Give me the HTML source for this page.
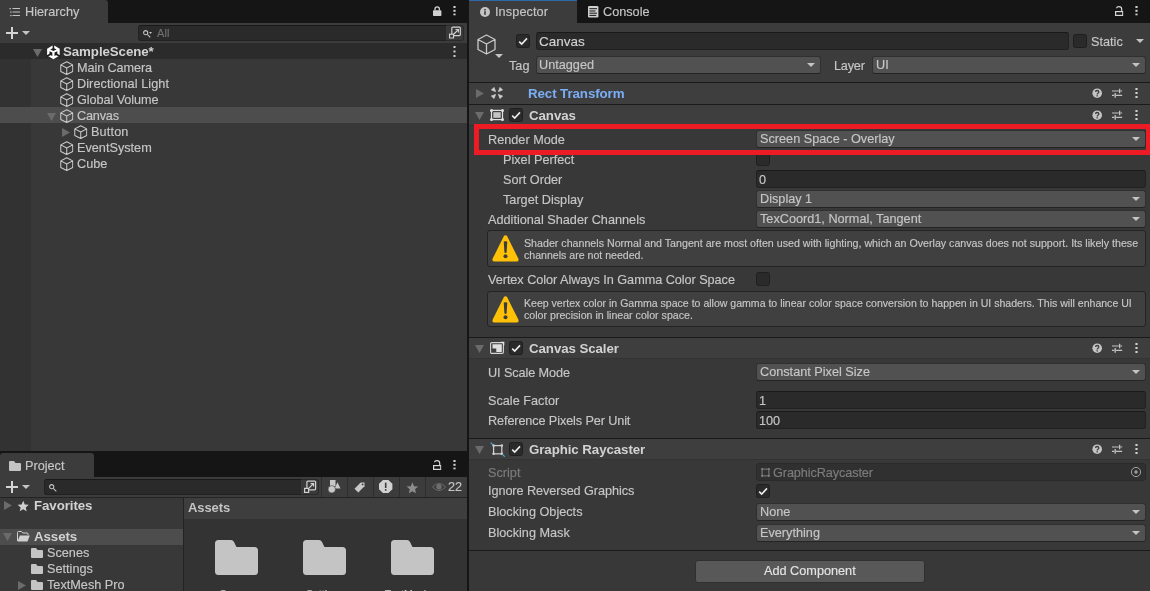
<!DOCTYPE html>
<html>
<head>
<meta charset="utf-8">
<title>Unity Inspector</title>
<style>
*{box-sizing:border-box;margin:0;padding:0}
html,body{width:1150px;height:591px;overflow:hidden;background:#151515}
body{font-family:"Liberation Sans",sans-serif;font-size:12.7px;color:#c6c6c6;position:relative}
.a{position:absolute}
.t{position:absolute;white-space:nowrap;line-height:16px;height:16px;will-change:transform;-webkit-text-stroke:0.15px}
.b{font-weight:bold;font-size:13.3px;color:#d2d2d2;-webkit-text-stroke:0;letter-spacing:-0.08px;margin-left:-0.5px}
svg{position:absolute;overflow:visible}
.srch{background:#2a2a2a;border:1px solid #212121;border-top-color:#191919;border-radius:3px}
.hdr{position:absolute;left:469px;width:681px;background:#3e3e3e;border-top:1px solid #1a1a1a}
.fld{position:absolute;background:#2a2a2a;border:1px solid #212121;border-top-color:#191919;border-radius:3px}
.dd{position:absolute;background:#515151;border:1px solid #303030;border-bottom-color:#242424;border-radius:3px}
.cb{position:absolute;width:14px;height:14px;background:#2a2a2a;border:1px solid #1f1f1f;border-radius:2.5px}
</style>
</head>
<body>
<svg width="0" height="0" style="position:absolute"><defs>
<symbol id="cube" viewBox="0 0 14 15"><path d="M7 .8 13.200 4 13.200 10.800 7 14 .8 10.800 .8 4Z M.8 4 7 7.200 13.200 4 M7 7.200V14" fill="none" stroke="#cdcdcd" stroke-width="1.050" stroke-linejoin="round"/></symbol>
<symbol id="kebab" viewBox="0 0 3 11"><rect x=".5" y="0" width="2" height="2" fill="#d0d0d0"/><rect x=".5" y="4.500" width="2" height="2" fill="#d0d0d0"/><rect x=".5" y="9" width="2" height="2" fill="#d0d0d0"/></symbol>
<symbol id="kebabT" viewBox="0 0 3 9.600"><rect x=".4" y="0" width="2.200" height="2" fill="#d0d0d0"/><rect x=".4" y="3.800" width="2.200" height="2" fill="#d0d0d0"/><rect x=".4" y="7.600" width="2.200" height="2" fill="#d0d0d0"/></symbol>
<symbol id="kebabH" viewBox="0 0 3 10"><rect x=".4" y="0" width="2.200" height="2" fill="#d0d0d0"/><rect x=".4" y="4" width="2.200" height="2" fill="#d0d0d0"/><rect x=".4" y="8" width="2.200" height="2" fill="#d0d0d0"/></symbol>
<symbol id="tdown" viewBox="0 0 9 8"><path d="M0 0H9L4.500 8Z" fill="#6b6b6b"/></symbol>
<symbol id="tright" viewBox="0 0 8 9"><path d="M0 0V9L8 4.500Z" fill="#6b6b6b"/></symbol>
<symbol id="ddarr" viewBox="0 0 8 4"><path d="M0 0H8L4 4Z" fill="#c4c4c4"/></symbol>
<symbol id="plus" viewBox="0 0 12 12"><path d="M5 0H7V5H12V7H7V12H5V7H0V5H5Z" fill="#d4d4d4"/></symbol>
<symbol id="pick" viewBox="0 0 13 13"><rect x="2.900" y="1.100" width="8.700" height="8.700" rx="1" fill="none" stroke="#d0d0d0" stroke-width="1.200"/><path d="M5 8.200 9.300 3.900M6.600 3.600H9.600V6.600" fill="none" stroke="#d0d0d0" stroke-width="1.200"/><rect x=".6" y="8.400" width="4" height="4" fill="#333" stroke="#d0d0d0" stroke-width="1.200"/></symbol>
<symbol id="mag" viewBox="0 0 8 8"><circle cx="2.700" cy="2.700" r="2.100" fill="none" stroke="#c4c4c4" stroke-width="1.050"/><path d="M4.300 4.300 7.300 7.300" stroke="#c4c4c4" stroke-width="1.100"/></symbol>
<symbol id="folder" viewBox="0 0 12 10"><path d="M0 1Q0 0 1 0H5L6.500 2H11Q12 2 12 3V9Q12 10 11 10H1Q0 10 0 9Z" fill="#c4c4c4"/></symbol>
<symbol id="check" viewBox="0 0 14 14"><path d="M3.200 7.600 5.700 10.100 11 4.400" fill="none" stroke="#ededed" stroke-width="1.600"/></symbol>
<symbol id="help" viewBox="0 0 12 12"><circle cx="6" cy="6" r="5.500" fill="#c4c4c4"/><path d="M4.100 4.700Q4.100 2.900 6 2.900Q7.900 2.900 7.900 4.500Q7.900 5.500 6.900 6Q6 6.500 6 7.400" fill="none" stroke="#3e3e3e" stroke-width="1.500"/><rect x="5.200" y="8.300" width="1.600" height="1.500" fill="#3e3e3e"/></symbol>
<symbol id="preset" viewBox="0 0 12 12"><path d="M0 3.500H12M0 8.500H12" stroke="#c4c4c4" stroke-width="1.300"/><path d="M7.800 3.500H9.800M2.700 8.500H4.700" stroke="#3e3e3e" stroke-width="1.500"/><path d="M8.800 .8V6.200M3.700 5.800V11.200" stroke="#c4c4c4" stroke-width="1.500"/></symbol>
<symbol id="warn" viewBox="0 0 27 27"><path d="M13.500 .3Q14.600 .3 15.300 1.500L26.300 23.600Q27.300 26.600 24.600 26.600H2.400Q-.3 26.600 .7 23.600L11.700 1.500Q12.400 .3 13.500 .3Z" fill="#ffc107"/><path d="M11.700 6.600Q13.500 5.800 15.300 6.600L14.600 17.600Q13.500 18.200 12.400 17.600Z" fill="#3c3c3c"/><circle cx="13.500" cy="21.200" r="2" fill="#3c3c3c"/></symbol>
<symbol id="unlock" viewBox="0 0 8.400 10"><path d="M1.500 2.300Q1.700 .6 4 .6Q6.700 .6 6.700 3V5.600" fill="none" stroke="#d8d8d8" stroke-width="1.200"/><rect x=".6" y="5.600" width="7.200" height="3.800" fill="none" stroke="#d8d8d8" stroke-width="1.200"/></symbol>
<symbol id="ray" viewBox="0 0 14 14"><rect x="2.700" y="2.700" width="8.600" height="8.600" fill="none" stroke="currentColor" stroke-width="1.300"/><circle cx="2.700" cy="2.700" r="1.300" fill="currentColor"/><circle cx="11.300" cy="2.700" r="1.300" fill="currentColor"/><circle cx="2.700" cy="11.300" r="1.300" fill="currentColor"/><circle cx="11.300" cy="11.300" r="1.300" fill="currentColor"/></symbol>
</defs></svg>
<div class="a" style="left:0px;top:0px;width:467px;height:451px;background:#383838;"></div>
<div class="a" style="left:0px;top:43px;width:31px;height:408px;background:#323232;"></div>
<div class="a" style="left:0px;top:0px;width:467px;height:23px;background:#151515;"></div>
<div class="a" style="left:0px;top:0px;width:108px;height:23px;background:#3c3c3c;border-top-right-radius:3px"></div>
<div class="a" style="left:0px;top:23px;width:467px;height:20px;background:#3c3c3c;"></div>
<div class="a" style="left:0px;top:43px;width:467px;height:16px;background:#2b2b2b;"></div>
<div class="a" style="left:0px;top:107px;width:467px;height:16px;background:#4d4d4d;"></div>
<svg class="a" style="left:9px;top:7px" width="11" height="10" viewBox="0 0 11 10"><path d="M3.500 1.500H11M3.500 5H11M3.500 8.500H11" stroke="#c4c4c4" stroke-width="1.200"/><rect x="0.500" y="1" width="1.300" height="1.300" fill="#c4c4c4"/><rect x="1.200" y="4.400" width="1.300" height="1.300" fill="#c4c4c4"/><rect x="1.200" y="7.900" width="1.300" height="1.300" fill="#c4c4c4"/></svg>
<div class="t" style="left:25px;top:4px;">Hierarchy</div>
<svg class="a" style="left:433px;top:6px" width="8.400" height="10" viewBox="0 0 8.400 10"><path d="M2 4.500V3Q2 .8 4.200 .8Q6.400 .8 6.400 3V4.500" fill="none" stroke="#d0d0d0" stroke-width="1.300"/><rect x="0" y="4.300" width="8.400" height="5.700" rx=".8" fill="#d0d0d0"/></svg>
<svg class="a" style="left:452.5px;top:6.2px;" width="3" height="9.6"><use href="#kebabT"/></svg>
<svg class="a" style="left:6px;top:27px;" width="12" height="12"><use href="#plus"/></svg>
<svg class="a" style="left:22px;top:31px;" width="8" height="4"><use href="#ddarr"/></svg>
<div class="a srch" style="left:138px;top:25px;width:308px;height:16px;border-radius:3px 0 0 3px;border-right:none"></div>
<div class="a" style="left:446px;top:25px;width:18px;height:16px;background:#3a3a3a;border:1px solid #2a2a2a;border-left:none;border-radius:0 3px 3px 0"></div>
<svg class="a" style="left:142.7px;top:29.8px;" width="8" height="8"><use href="#mag"/></svg>
<svg class="a" style="left:149.300px;top:32px" width="3" height="2" viewBox="0 0 3 2"><path d="M0 0H3L1.500 2Z" fill="#c4c4c4"/></svg>
<div class="t" style="left:157px;top:25px;color:#6f6f6f;font-size:11px;letter-spacing:0.1px">All</div>
<svg class="a" style="left:448.9px;top:26px;" width="12.7" height="12.7"><use href="#pick"/></svg>
<svg class="a" style="left:33px;top:49px;" width="9" height="8"><use href="#tdown"/></svg>
<svg class="a" style="left:46.500px;top:44.500px" width="13" height="14.400" viewBox="0 0 13 14.400"><path d="M6.400 .1 12.700 3.700V10.600L6.400 14.300 .1 10.600V3.700Z" fill="#fff"/><path d="M5.600 0H7.200V3.300L9.500 4.400 6.400 5.900 3.300 4.400 5.600 3.300ZM2.500 6.200 5.300 7.600V10.900L2.500 9.500ZM10.300 6.200 7.500 7.600V10.900L10.300 9.500Z" fill="#1c1c1c"/><path d="M-.3 11.300 4 8.900M13.100 11.300 8.800 8.900" stroke="#1c1c1c" stroke-width="1.700"/></svg>
<div class="t b" style="left:63.5px;top:44px;">SampleScene*</div>
<svg class="a" style="left:453px;top:46px;" width="3" height="11"><use href="#kebab"/></svg>
<svg class="a" style="left:60px;top:60.5px;" width="13.5" height="14.5"><use href="#cube"/></svg>
<div class="t" style="left:77px;top:60px;letter-spacing:-0.1px">Main Camera</div>
<svg class="a" style="left:60px;top:76.5px;" width="13.5" height="14.5"><use href="#cube"/></svg>
<div class="t" style="left:77px;top:76px;letter-spacing:0.06px">Directional Light</div>
<svg class="a" style="left:60px;top:92.5px;" width="13.5" height="14.5"><use href="#cube"/></svg>
<div class="t" style="left:77px;top:92px;letter-spacing:-0.08px">Global Volume</div>
<svg class="a" style="left:60px;top:108.5px;" width="13.5" height="14.5"><use href="#cube"/></svg>
<div class="t" style="left:77px;top:108px;letter-spacing:-0.2px">Canvas</div>
<svg class="a" style="left:74px;top:124.5px;" width="13.5" height="14.5"><use href="#cube"/></svg>
<div class="t" style="left:91px;top:124px;letter-spacing:0.15px">Button</div>
<svg class="a" style="left:60px;top:140.5px;" width="13.5" height="14.5"><use href="#cube"/></svg>
<div class="t" style="left:77px;top:140px;letter-spacing:0px">EventSystem</div>
<svg class="a" style="left:60px;top:156.5px;" width="13.5" height="14.5"><use href="#cube"/></svg>
<div class="t" style="left:77px;top:156px;letter-spacing:0px">Cube</div>
<svg class="a" style="left:47px;top:112.5px;" width="9" height="8"><use href="#tdown"/></svg>
<svg class="a" style="left:62px;top:127.5px;" width="8" height="9"><use href="#tright"/></svg>
<div class="a" style="left:0px;top:451px;width:467px;height:140px;background:#383838;"></div>
<div class="a" style="left:0px;top:451px;width:467px;height:26px;background:#151515;"></div>
<div class="a" style="left:0px;top:453px;width:94px;height:24px;background:#3c3c3c;border-top-left-radius:3px;border-top-right-radius:3px"></div>
<div class="a" style="left:0px;top:477px;width:467px;height:20px;background:#3c3c3c;"></div>
<svg class="a" style="left:9px;top:461px;" width="12" height="10"><use href="#folder"/></svg>
<div class="t" style="left:25px;top:458px;">Project</div>
<svg class="a" style="left:433px;top:460px;" width="8.4" height="10"><use href="#unlock"/></svg>
<svg class="a" style="left:452.5px;top:460.2px;" width="3" height="9.6"><use href="#kebabT"/></svg>
<svg class="a" style="left:6px;top:481px;" width="12" height="12"><use href="#plus"/></svg>
<svg class="a" style="left:22px;top:485px;" width="8" height="4"><use href="#ddarr"/></svg>
<div class="a srch" style="left:44px;top:479px;width:257px;height:16px;border-radius:3px 0 0 3px;border-right:none"></div>
<div class="a" style="left:301px;top:479px;width:18px;height:16px;background:#3a3a3a;border:1px solid #2a2a2a;border-left:none;border-radius:0 3px 3px 0"></div>
<svg class="a" style="left:49px;top:484px;" width="8" height="8"><use href="#mag"/></svg>
<svg class="a" style="left:303.7px;top:480.3px;" width="13" height="13"><use href="#pick"/></svg>
<div class="a" style="left:321px;top:477px;width:1px;height:20px;background:#2e2e2e;"></div>
<div class="a" style="left:347px;top:477px;width:1px;height:20px;background:#2e2e2e;"></div>
<div class="a" style="left:373px;top:477px;width:1px;height:20px;background:#2e2e2e;"></div>
<div class="a" style="left:399px;top:477px;width:1px;height:20px;background:#2e2e2e;"></div>
<div class="a" style="left:425px;top:477px;width:1px;height:20px;background:#2e2e2e;"></div>
<svg class="a" style="left:327.500px;top:480px" width="12.500" height="13" viewBox="0 0 12.500 13"><rect x="2" y="0" width="5.500" height="6" fill="#c8c8c8"/><path d="M9.500 2.200 12.500 8.500H6.500Z" fill="#c8c8c8"/><circle cx="3.800" cy="9.300" r="3.700" fill="#c8c8c8" stroke="#3c3c3c" stroke-width=".6"/></svg>
<svg class="a" style="left:354px;top:481.500px" width="11" height="11" viewBox="0 0 11 11"><path d="M10.500 .5 10.500 4.300 4.300 10.500 .5 6.700 6.700 .5Z" fill="#c8c8c8"/><circle cx="8.600" cy="2.400" r=".9" fill="#3c3c3c"/></svg>
<svg class="a" style="left:378.800px;top:480px" width="13.400" height="13" viewBox="0 0 13.400 13"><path d="M4 0H9.400L13.400 3.800V9.200L9.400 13H4L0 9.200V3.800Z" fill="#d2d2d2"/><rect x="5.900" y="2.600" width="1.600" height="5.400" fill="#3c3c3c"/><rect x="5.900" y="9.100" width="1.600" height="1.600" fill="#3c3c3c"/></svg>
<svg class="a" style="left:406px;top:481.500px" width="12.800" height="12" viewBox="0 0 24 22.500"><path d="M12 .5 15.100 7.800 22.800 8.500 17 13.600 18.700 21.200 12 17.200 5.300 21.200 7 13.600 1.200 8.500 8.900 7.800Z" fill="#8c8c8c"/></svg>
<svg class="a" style="left:432px;top:483px" width="14" height="8" viewBox="0 0 14 8"><path d="M.4 4Q3.500 .5 7 .5Q10.500 .5 13.600 4Q10.500 7.500 7 7.500Q3.500 7.500 .4 4Z" fill="none" stroke="#6e6e6e" stroke-width=".9"/><circle cx="7" cy="3.700" r="2.700" fill="#6e6e6e"/></svg>
<div class="a" style="left:0px;top:497px;width:467px;height:1px;background:#232323;"></div>
<div class="a" style="left:0px;top:529px;width:183px;height:16px;background:#4d4d4d;"></div>
<div class="a" style="left:183px;top:498px;width:1px;height:93px;background:#232323;"></div>
<div class="a" style="left:184px;top:498px;width:283px;height:21px;background:#3e3e3e;"></div>
<div class="a" style="left:184px;top:519px;width:283px;height:72px;background:#333;"></div>
<svg class="a" style="left:4px;top:501px;" width="8" height="9"><use href="#tright"/></svg>
<svg class="a" style="left:16.800px;top:500px" width="12.400" height="12.400" viewBox="0 0 24 24"><path d="M12 1.500 15.100 8.600 22.800 9.300 17 14.400 18.700 22 12 18 5.300 22 7 14.400 1.200 9.300 8.900 8.600Z" fill="#d0d0d0"/></svg>
<div class="t b" style="left:34px;top:498px;">Favorites</div>
<svg class="a" style="left:3px;top:533px;" width="9" height="8"><use href="#tdown"/></svg>
<svg class="a" style="left:17px;top:531px" width="13" height="11" viewBox="0 0 13 11"><path d="M.5 10V1.500Q.5.5 1.500.5H4.500L5.800 2H10Q11 2 11 3V4" fill="none" stroke="#d0d0d0"/><path d="M.5 10.500 2.800 4.500H12.800L10.500 10.500Z" fill="#d0d0d0"/></svg>
<div class="t b" style="left:34px;top:529px;">Assets</div>
<svg class="a" style="left:31px;top:548px;" width="12" height="10"><use href="#folder"/></svg>
<div class="t" style="left:47px;top:545px;">Scenes</div>
<svg class="a" style="left:31px;top:564px;" width="12" height="10"><use href="#folder"/></svg>
<div class="t" style="left:47px;top:561px;">Settings</div>
<svg class="a" style="left:31px;top:580px;" width="12" height="10"><use href="#folder"/></svg>
<div class="t" style="left:47px;top:577px;">TextMesh Pro</div>
<svg class="a" style="left:18px;top:580.5px;" width="8" height="9"><use href="#tright"/></svg>
<div class="t b" style="left:188px;top:500px;color:#c4c4c4;font-size:13px">Assets</div>
<svg class="a" style="left:215px;top:540.300px" width="43" height="35" viewBox="0 0 43 35"><path d="M0 3.500Q0 0 3.500 0H16Q18 0 19 2L21.500 7H39.500Q43 7 43 10.500V31.500Q43 35 39.500 35H3.500Q0 35 0 31.500Z" fill="#c4c4c4"/></svg>
<svg class="a" style="left:303px;top:540.300px" width="43" height="35" viewBox="0 0 43 35"><path d="M0 3.500Q0 0 3.500 0H16Q18 0 19 2L21.500 7H39.500Q43 7 43 10.500V31.500Q43 35 39.500 35H3.500Q0 35 0 31.500Z" fill="#c4c4c4"/></svg>
<svg class="a" style="left:391px;top:540.300px" width="43" height="35" viewBox="0 0 43 35"><path d="M0 3.500Q0 0 3.500 0H16Q18 0 19 2L21.500 7H39.500Q43 7 43 10.500V31.500Q43 35 39.500 35H3.500Q0 35 0 31.500Z" fill="#c4c4c4"/></svg>
<div class="t" style="left:196.5px;top:587.500px;width:80px;text-align:center;font-size:10.500px;line-height:12px;height:12px">Scenes</div>
<div class="t" style="left:284.5px;top:587.500px;width:80px;text-align:center;font-size:10.500px;line-height:12px;height:12px">Settings</div>
<div class="t" style="left:372.5px;top:587.500px;width:80px;text-align:center;font-size:10.500px;line-height:12px;height:12px">TextMesh ...</div>
<div class="t" style="left:447.5px;top:479px;">22</div>
<div class="a" style="left:469px;top:0px;width:681px;height:591px;background:#383838;"></div>
<div class="a" style="left:469px;top:0px;width:681px;height:82px;background:#3c3c3c;"></div>
<div class="a" style="left:469px;top:0px;width:681px;height:23px;background:#151515;"></div>
<div class="a" style="left:469px;top:0px;width:108px;height:23px;background:#3c3c3c;border-top:1px solid #2f68a6"></div>
<svg class="a" style="left:480px;top:7px" width="10" height="10" viewBox="0 0 10 10"><circle cx="5" cy="5" r="5" fill="#c4c4c4"/><rect x="4.200" y="4.200" width="1.600" height="3.600" fill="#3c3c3c"/><rect x="4.200" y="2" width="1.600" height="1.500" fill="#3c3c3c"/></svg>
<div class="t" style="left:495px;top:4px;letter-spacing:0.1px">Inspector</div>
<svg class="a" style="left:587.800px;top:5.800px" width="10.400" height="11.400" viewBox="0 0 10.400 11.400"><rect x="0" y="0" width="10.400" height="11.400" rx="1.200" fill="#d0d0d0"/><path d="M1.400 2.700H9M1.400 5H7.500M1.400 7.200H9M1.400 9.400H8.200" stroke="#151515" stroke-width="1"/></svg>
<div class="t" style="left:603px;top:4px;">Console</div>
<svg class="a" style="left:1114.5px;top:6px;" width="8.4" height="10"><use href="#unlock"/></svg>
<svg class="a" style="left:1134.5px;top:6.2px;" width="3" height="9.6"><use href="#kebabT"/></svg>
<svg class="a" style="left:476.500px;top:34px" width="19" height="21" viewBox="0 0 19 21"><path d="M9.500 1 18 5.500V15.500L9.500 20 1 15.500V5.500Z M1 5.500 9.500 10 18 5.500M9.500 10V20" fill="none" stroke="#cacaca" stroke-width="1.300" stroke-linejoin="round"/></svg>
<svg class="a" style="left:495px;top:54px;" width="8" height="4"><use href="#ddarr"/></svg>
<div class="cb" style="left:516px;top:34px;width:14px;height:14px;"></div>
<svg class="a" style="left:516px;top:34px;" width="14" height="14"><use href="#check"/></svg>
<div class="fld" style="left:536px;top:32px;width:533px;height:18px;"></div>
<div class="t" style="left:539px;top:34px;font-size:13.500px;color:#d2d2d2">Canvas</div>
<div class="cb" style="left:1073px;top:34px;width:14px;height:14px;"></div>
<div class="t" style="left:1091px;top:34px;">Static</div>
<svg class="a" style="left:1136px;top:39px;" width="8" height="4"><use href="#ddarr"/></svg>
<div class="t" style="left:509px;top:58px;">Tag</div>
<div class="dd" style="left:536px;top:56px;width:285px;height:18px;"></div>
<div class="t" style="left:539px;top:57px;">Untagged</div>
<svg class="a" style="left:807px;top:63px;" width="8" height="4"><use href="#ddarr"/></svg>
<div class="t" style="left:834px;top:58px;letter-spacing:-0.2px">Layer</div>
<div class="dd" style="left:872px;top:56px;width:274px;height:18px;"></div>
<div class="t" style="left:876px;top:57px;">UI</div>
<svg class="a" style="left:1132px;top:63px;" width="8" height="4"><use href="#ddarr"/></svg>
<div class="hdr" style="left:469px;top:82px;width:681px;height:22px;"></div>
<svg class="a" style="left:476px;top:89px;" width="8" height="9"><use href="#tright"/></svg>
<svg class="a" style="left:491px;top:87px" width="12" height="12" viewBox="0 0 12 12"><path d="M.4 3 3 .4 4.600 4.600ZM11.600 3 9 .4 7.400 4.600ZM.4 9 3 11.600 4.600 7.400ZM11.600 9 9 11.600 7.400 7.400Z" fill="#d0d0d0" stroke="#d0d0d0" stroke-width=".7" stroke-linejoin="round"/></svg>
<div class="t b" style="left:528.4px;top:86px;color:#7baef5">Rect Transform</div>
<svg class="a" style="left:1091.8px;top:87.8px;" width="10.4" height="10.4"><use href="#help"/></svg>
<svg class="a" style="left:1111.8px;top:87.8px;" width="10.4" height="10.4"><use href="#preset"/></svg>
<svg class="a" style="left:1135.3px;top:88px;" width="3" height="10"><use href="#kebabH"/></svg>
<div class="hdr" style="left:469px;top:104px;width:681px;height:21px;"></div>
<svg class="a" style="left:475px;top:112px;" width="9" height="8"><use href="#tdown"/></svg>
<svg class="a" style="left:490px;top:109px" width="14" height="12" viewBox="0 0 14 12"><rect x="1.500" y="1.400" width="11" height="9.200" fill="none" stroke="#e2e2e2" stroke-width="1.200"/><circle cx="1.500" cy="1.400" r="1.500" fill="#e2e2e2"/><circle cx="12.500" cy="1.400" r="1.500" fill="#e2e2e2"/><circle cx="1.500" cy="10.600" r="1.500" fill="#e2e2e2"/><circle cx="12.500" cy="10.600" r="1.500" fill="#e2e2e2"/><rect x="3.300" y="3.200" width="7.400" height="5.600" fill="#c4c4c4"/></svg>
<div class="cb" style="left:509px;top:108px;width:14px;height:14px;"></div>
<svg class="a" style="left:509px;top:108px;" width="14" height="14"><use href="#check"/></svg>
<div class="t b" style="left:529px;top:108px;">Canvas</div>
<svg class="a" style="left:1091.8px;top:109.8px;" width="10.4" height="10.4"><use href="#help"/></svg>
<svg class="a" style="left:1111.8px;top:109.8px;" width="10.4" height="10.4"><use href="#preset"/></svg>
<svg class="a" style="left:1135.3px;top:110px;" width="3" height="10"><use href="#kebabH"/></svg>
<div class="a" style="left:469px;top:125px;width:681px;height:1px;background:#333;"></div>
<div class="t" style="left:488px;top:132px;">Render Mode</div>
<div class="dd" style="left:756px;top:130px;width:390px;height:18px;"></div>
<div class="t" style="left:760px;top:131px;">Screen Space - Overlay</div>
<svg class="a" style="left:1132px;top:137px;" width="8" height="4"><use href="#ddarr"/></svg>
<div class="t" style="left:503px;top:152px;">Pixel Perfect</div>
<div class="cb" style="left:756px;top:151.5px;width:14px;height:14px;"></div>
<div class="t" style="left:503px;top:172px;">Sort Order</div>
<div class="fld" style="left:756px;top:170px;width:390px;height:18px;"></div>
<div class="t" style="left:759px;top:172px;">0</div>
<div class="t" style="left:503px;top:192px;">Target Display</div>
<div class="dd" style="left:756px;top:190px;width:390px;height:18px;"></div>
<div class="t" style="left:760px;top:191px;">Display 1</div>
<svg class="a" style="left:1132px;top:197px;" width="8" height="4"><use href="#ddarr"/></svg>
<div class="t" style="left:488px;top:212px;">Additional Shader Channels</div>
<div class="dd" style="left:756px;top:210px;width:390px;height:18px;"></div>
<div class="t" style="left:760px;top:211px;">TexCoord1, Normal, Tangent</div>
<svg class="a" style="left:1132px;top:217px;" width="8" height="4"><use href="#ddarr"/></svg>
<div class="a" style="left:487px;top:230px;width:659px;height:37px;background:#404040;border:1px solid #232323;border-radius:3px"></div>
<svg class="a" style="left:492.2px;top:234.7px;" width="27" height="27"><use href="#warn"/></svg>
<div class="t" style="left:524px;top:237px;font-size:10.67px;line-height:12px;height:12px">Shader channels Normal and Tangent are most often used with lighting, which an Overlay canvas does not support. Its likely these</div>
<div class="t" style="left:524px;top:249px;font-size:10.59px;line-height:12px;height:12px">channels are not needed.</div>
<div class="t" style="left:488px;top:272px;letter-spacing:-0.05px">Vertex Color Always In Gamma Color Space</div>
<div class="cb" style="left:756px;top:272px;width:14px;height:14px;"></div>
<div class="a" style="left:487px;top:291px;width:659px;height:36px;background:#404040;border:1px solid #232323;border-radius:3px"></div>
<svg class="a" style="left:492.2px;top:295.7px;" width="27" height="27"><use href="#warn"/></svg>
<div class="t" style="left:524px;top:297px;font-size:10.56px;line-height:12px;height:12px">Keep vertex color in Gamma space to allow gamma to linear color space conversion to happen in UI shaders. This will enhance UI</div>
<div class="t" style="left:524px;top:309px;font-size:10.63px;line-height:12px;height:12px">color precision in linear color space.</div>
<div class="hdr" style="left:469px;top:337px;width:681px;height:21px;"></div>
<svg class="a" style="left:475px;top:345px;" width="9" height="8"><use href="#tdown"/></svg>
<svg class="a" style="left:490px;top:342px" width="14" height="12" viewBox="0 0 14 12"><rect x=".6" y=".6" width="12.800" height="10.800" rx="1.200" fill="none" stroke="#d4d4d4" stroke-width="1.100"/><path d="M2.500 2.300H11.800V10H6.300V6.500H2.500Z" fill="#e0e0e0"/><path d="M10.800 .3H13.700V3.200" fill="none" stroke="#e6e6e6" stroke-width="1.200"/></svg>
<div class="cb" style="left:509px;top:341px;width:14px;height:14px;"></div>
<svg class="a" style="left:509px;top:341px;" width="14" height="14"><use href="#check"/></svg>
<div class="t b" style="left:529px;top:341px;">Canvas Scaler</div>
<svg class="a" style="left:1091.8px;top:342.8px;" width="10.4" height="10.4"><use href="#help"/></svg>
<svg class="a" style="left:1111.8px;top:342.8px;" width="10.4" height="10.4"><use href="#preset"/></svg>
<svg class="a" style="left:1135.3px;top:343px;" width="3" height="10"><use href="#kebabH"/></svg>
<div class="a" style="left:469px;top:358px;width:681px;height:1px;background:#333;"></div>
<div class="t" style="left:488px;top:365px;letter-spacing:-0.1px">UI Scale Mode</div>
<div class="dd" style="left:756px;top:363px;width:390px;height:18px;"></div>
<div class="t" style="left:760px;top:364px;">Constant Pixel Size</div>
<svg class="a" style="left:1132px;top:370px;" width="8" height="4"><use href="#ddarr"/></svg>
<div class="t" style="left:488px;top:393px;">Scale Factor</div>
<div class="fld" style="left:756px;top:390.5px;width:390px;height:18px;"></div>
<div class="t" style="left:759px;top:392.5px;">1</div>
<div class="t" style="left:488px;top:413px;letter-spacing:-0.12px">Reference Pixels Per Unit</div>
<div class="fld" style="left:756px;top:410.5px;width:390px;height:18px;"></div>
<div class="t" style="left:759px;top:412.5px;">100</div>
<div class="hdr" style="left:469px;top:438px;width:681px;height:21px;"></div>
<svg class="a" style="left:475px;top:446px;" width="9" height="8"><use href="#tdown"/></svg>
<svg class="a" style="left:490.500px;top:442.500px;color:#d0d0d0" width="13.400" height="13.400"><use href="#ray"/></svg>
<svg class="a" style="left:490.500px;top:442.500px" width="13.400" height="13.400" viewBox="0 0 14 14"><path d="M-.3 -.3 2 2M12 12 14.300 14.300" stroke="#4fb3e8" stroke-width="1.100"/></svg>
<div class="cb" style="left:509px;top:442px;width:14px;height:14px;"></div>
<svg class="a" style="left:509px;top:442px;" width="14" height="14"><use href="#check"/></svg>
<div class="t b" style="left:529px;top:442px;">Graphic Raycaster</div>
<svg class="a" style="left:1091.8px;top:443.8px;" width="10.4" height="10.4"><use href="#help"/></svg>
<svg class="a" style="left:1111.8px;top:443.8px;" width="10.4" height="10.4"><use href="#preset"/></svg>
<svg class="a" style="left:1135.3px;top:444px;" width="3" height="10"><use href="#kebabH"/></svg>
<div class="a" style="left:469px;top:459px;width:681px;height:1px;background:#333;"></div>
<div class="t" style="left:488px;top:465px;color:#7c7c7c">Script</div>
<div class="a" style="left:756px;top:463px;width:390px;height:18px;background:#303030;border:1px solid #2a2a2a;border-radius:3px"></div>
<svg class="a" style="left:759.500px;top:466.500px;color:#808080" width="11" height="11"><use href="#ray"/></svg>
<div class="t" style="left:773px;top:465px;color:#7c7c7c;letter-spacing:-0.1px">GraphicRaycaster</div>
<svg class="a" style="left:1130px;top:466px" width="12" height="12" viewBox="0 0 12 12"><circle cx="6" cy="6" r="4.600" fill="none" stroke="#a0a0a0" stroke-width="1"/><circle cx="6" cy="6" r="1.700" fill="#a0a0a0"/></svg>
<div class="t" style="left:488px;top:483px;letter-spacing:-0.08px">Ignore Reversed Graphics</div>
<div class="cb" style="left:756px;top:484px;width:14px;height:14px;"></div>
<svg class="a" style="left:756px;top:484px;" width="14" height="14"><use href="#check"/></svg>
<div class="t" style="left:488px;top:504px;">Blocking Objects</div>
<div class="dd" style="left:756px;top:502.5px;width:390px;height:18px;"></div>
<div class="t" style="left:760px;top:503.5px;">None</div>
<svg class="a" style="left:1132px;top:509.5px;" width="8" height="4"><use href="#ddarr"/></svg>
<div class="t" style="left:488px;top:525px;">Blocking Mask</div>
<div class="dd" style="left:756px;top:523.5px;width:390px;height:18px;"></div>
<div class="t" style="left:760px;top:524.5px;">Everything</div>
<svg class="a" style="left:1132px;top:530.5px;" width="8" height="4"><use href="#ddarr"/></svg>
<div class="a" style="left:469px;top:550px;width:681px;height:1px;background:#1a1a1a;"></div>
<div class="a" style="left:695px;top:560px;width:230px;height:23px;background:#585858;border:1px solid #303030;border-radius:3px"></div>
<div class="t" style="left:764px;top:563px;color:#e4e4e4">Add Component</div>
<div class="a" style="left:474px;top:124px;width:677px;height:31px;border:5px solid #ed1c24"></div>
</body>
</html>
